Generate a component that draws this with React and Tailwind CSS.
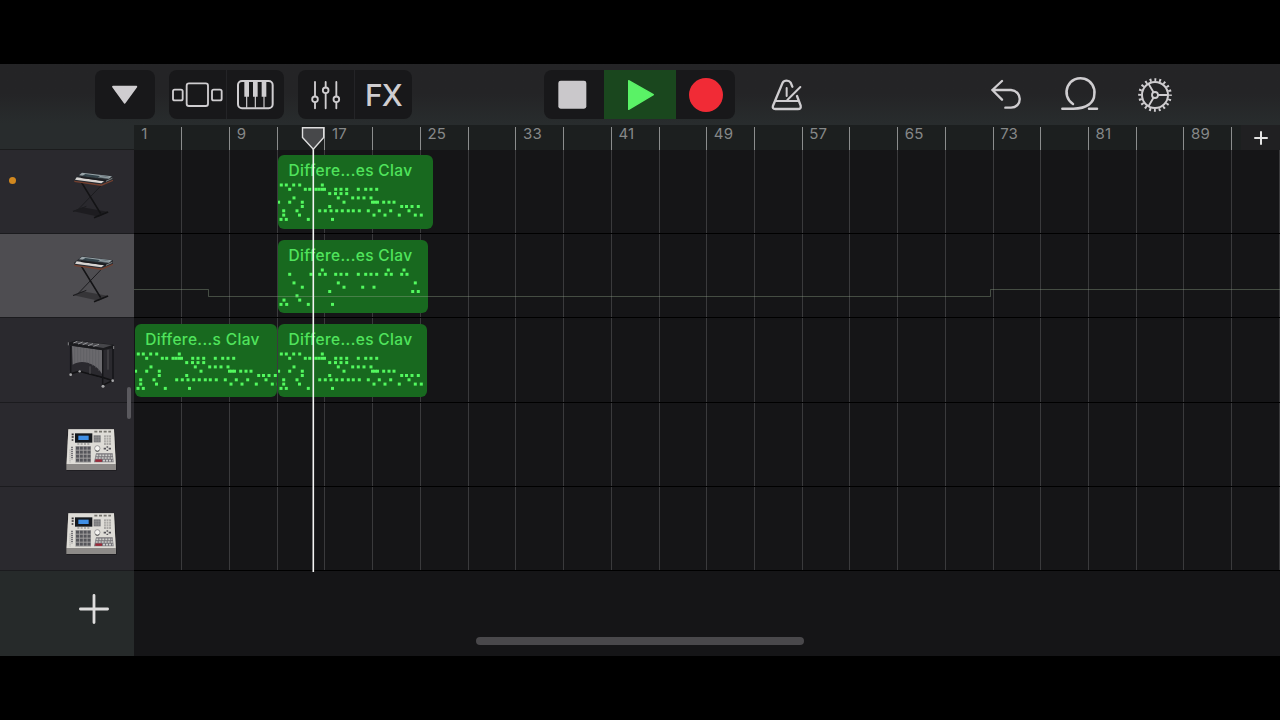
import React from "react";

const BAR_LABELS = Array.from({ length: 24 }, (_, i) =>
  i % 2 === 0 && i < 23 ? 1 + i * 4 : null,
);

// each entry is a pitch row, values are note positions inside the clip
const MELODY = [
  [3.3, 8.3, 15.7, 21.7, 44.3],
  [11.7, 27.3, 31.7, 38, 41, 44, 46.5, 57.7, 63, 68.7, 80.3, 87.7, 93, 98.7],
  [51.7, 57.5, 63, 68.7],
  [16, 60.3, 74.7, 80.3, 86, 93],
  [0.6, 11.7, 24.3, 66, 94.5, 97, 99.5, 105.7, 111, 116],
  [24.3, 51.7, 123.7, 128.5, 134, 140.3],
  [5.7, 19, 41.7, 47.3, 53, 58.7, 64.3, 70.3, 75.3, 81.3, 90.3, 101.3, 112.7, 131],
  [5.7, 21.5, 96, 107, 121.3, 137.3, 143.3],
  [3, 8.3, 30.3, 54.5],
];

const CHORDS = [
  [44.3, 110.3, 126],
  [11.7, 33, 41.7, 47.3, 57.7, 63, 68.7, 80.3, 87.7, 93, 98.7, 108, 113.3, 123.7, 129],
  [],
  [16, 60.3, 137.3],
  [24.3, 66, 84.7, 96],
  [51.7, 134.7, 140.3],
  [19],
  [6, 21.7],
  [3, 8.7, 30.3, 54.5],
];

const TRACKS = [
  {
    id: 1,
    instrument: "keyboard",
    armed: true,
    clips: [{ name: "Differe...es Clav", offset: 144.4, width: 154.4, notes: MELODY }],
  },
  {
    id: 2,
    instrument: "keyboard",
    selected: true,
    clips: [{ name: "Differe...es Clav", offset: 144.4, width: 150, notes: CHORDS }],
  },
  {
    id: 3,
    instrument: "vibraphone",
    clips: [
      { name: "Differe...s Clav", offset: 1.2, width: 141.8, notes: MELODY },
      { name: "Differe...es Clav", offset: 1.4, width: 148.6, notes: MELODY },
    ],
  },
  { id: 4, instrument: "sampler", clips: [] },
  { id: 5, instrument: "sampler", clips: [] },
];

function Icon({ box, className, children }) {
  return (
    <svg
      viewBox={box}
      className={`h-[49px] shrink-0 ${className}`}
      fill="none"
      stroke="#cfcdd0"
      strokeWidth="5.5"
      strokeLinecap="round"
      strokeLinejoin="round"
    >
      {children}
    </svg>
  );
}

function Keyboard() {
  return (
    <svg viewBox="198 0 156 252" className="h-[84px] w-[52px]">
      <path d="M217 183 248 172 327 186 296 200Z" fill="#000" opacity=".3" />
      <path d="M304 106 234 179M219 185l40-16" stroke="#1c1c1f" strokeWidth="3" />
      <path d="M245 98 302 191M282 203l42-17" stroke="#131315" strokeWidth="5" />
      <path d="M223 91 303 103 339 88V93L304 108 223 96Z" fill="#74402f" />
      <path d="M222 86 246 67 339 79V89L304 103 224 92Z" fill="#282b30" />
      <path d="M246 68 336 79 327 86 237 76Z" fill="#98a3a8" />
      <path d="M256 72 300 78 293 84 247 78Z" fill="#34444b" />
      <path d="M301 77l25 4M297 82l23 3" stroke="#59666c" strokeWidth="2" />
      <path d="M230 82 312 94 304 100 225 89Z" fill="#d6d3d1" />
      <path d="M243 82 318 92" stroke="#1b1b1e" strokeWidth="4" />
      <path d="M318 94l19-9" stroke="#7f8384" strokeWidth="3" />
    </svg>
  );
}

function Vibraphone() {
  return (
    <svg viewBox="198 0 156 252" className="h-[84px] w-[52px]">
      <path d="M237 160 307 178 339 188M210 168l28-8M307 202l32-15" stroke="#121214" strokeWidth="4.5" />
      <path d="M212 84v82M308 94v108M339 90v96" stroke="#151518" strokeWidth="4.5" />
      <path d="M324 95v60M270 145v23" stroke="#68686b" strokeWidth="2" />
      <path d="M216 84 306 96V168C290 137 246 121 218 140Z" fill="#6a696d" />
      <path
        d="M224 86v49M233 87v44M242 88v43M251 89v43M260 90v44M269 91v47M278 92v52M287 93v57M296 94v65"
        stroke="#5b5a5f"
        strokeWidth="1.5"
      />
      <path d="M206 74 228 67 341 80V90L307 97 206 82Z" fill="#1a1a1d" />
      <path d="M218 75 234 69 337 81 310 90Z" fill="#46464a" />
      <path
        d="M220 75l12-5M234 78l14-6M248 80l15-6M264 83l15-6M280 85l17-6"
        stroke="#a4a4a7"
        strokeWidth="2.5"
      />
      <path d="M205 73v9M341 84v9" stroke="#858588" strokeWidth="3" />
      <g fill="#a8a8aa">
        <circle cx="212" cy="170" r="4" />
        <circle cx="239" cy="160" r="3.5" />
        <circle cx="309" cy="205" r="4.5" />
        <circle cx="338" cy="188" r="4" />
      </g>
    </svg>
  );
}

function Sampler() {
  const pads = [0, 1, 2, 3];
  return (
    <svg viewBox="198 2 156 252" className="h-[84px] w-[52px]">
      <path d="M203 84 345 84 350 205 200 205Z" fill="#111113" opacity=".6" />
      <path d="M205 81H342L348 185V203H199V185Z" fill="#8d8a88" />
      <path d="M205 81H342L347 185H200Z" fill="#dedcd7" />
      <rect x="225" y="93" width="52" height="28" fill="#15181d" />
      <rect x="235" y="100" width="31" height="13" fill="#3f8fe6" />
      <path d="M215 96h6M215 104h6M215 113h5" stroke="#322e30" strokeWidth="5" />
      <path d="M232 125h40" stroke="#777" strokeWidth="3" strokeDasharray="6 4" />
      <path d="M283 88h50" stroke="#77756f" strokeWidth="5" strokeDasharray="9 5" />
      <path d="M216 133v38" stroke="#77757a" strokeWidth="6" strokeDasharray="4 2" />
      <path d="M210 142v38" stroke="#999" strokeWidth="3" strokeDasharray="3 3" />
      <rect x="226" y="131" width="47" height="50" fill="#a3a1a1" />
      {pads.map((r) =>
        pads.map((c) => (
          <rect key={`${r}-${c}`} x={228 + c * 11.5} y={133 + r * 12} width="9" height="9" fill="#55555a" />
        )),
      )}
      <rect x="281" y="99" width="21" height="21" fill="#77777a" />
      <path d="M281 106h21M281 113h21M288 99v21M295 99v21" stroke="#aaa" />
      <rect x="312" y="99" width="21" height="29" fill="#a8a6a4" />
      <path d="M312 106h21M312 113h21M312 120h21M319 99v29M326 99v29" stroke="#dedcd7" strokeWidth="2" />
      <circle cx="292" cy="138" r="8" fill="#f4f3f0" stroke="#77757a" strokeWidth="2" />
      <path d="M286 145q6 5 12 0" stroke="#555" strokeWidth="3" fill="none" />
      <path d="M311 139h7M326 139h7M322 132v4M322 142v4" stroke="#55535a" strokeWidth="5" />
      <path d="M288 153H338L341 180H282Z" fill="#77757a" />
      <path d="M289 159h48M287 167h51" stroke="#d0cfcc" strokeWidth="5" strokeDasharray="6 3" />
      <path d="M286 175h20" stroke="#9c2939" strokeWidth="7" />
      <path d="M309 175h29" stroke="#ccc" strokeWidth="5" strokeDasharray="6 3" />
    </svg>
  );
}

const INSTRUMENTS = {
  keyboard: Keyboard,
  vibraphone: Vibraphone,
  sampler: Sampler,
};

function Toolbar() {
  return (
    <header className="flex h-[61px] shrink-0 items-start pt-[6px] pl-[95px]">
      <button className="rounded-lg bg-[#18181a]">
        <Icon box="45 30 180 147" className="w-[60px]">
          <path d="M99 80H169L134 128Z" fill="#cfcdd0" />
        </Icon>
      </button>

      <div className="ml-[14px] flex rounded-lg bg-[#18181a]">
        <button className="w-[58px] border-r border-[#242427]">
          <Icon box="267 30 174 147" className="w-[58px]">
            <rect x="279" y="89" width="29" height="32" rx="5" />
            <rect x="320" y="70" width="64" height="68" rx="7" />
            <rect x="396" y="89" width="29" height="32" rx="5" />
          </Icon>
        </button>
        <button>
          <Icon box="441 30 171 147" className="w-[57px]">
            <rect x="474" y="63" width="104" height="82" rx="12" strokeWidth="6" />
            <path d="M500 108v34M526 108v34M552 108v34" strokeWidth="3.5" />
            <path
              d="M493 64h14v46h-14zM519 64h14v46h-14zM545 64h14v46h-14z"
              fill="#cfcdd0"
              stroke="none"
            />
          </Icon>
        </button>
      </div>

      <div className="ml-[14px] flex rounded-lg bg-[#18181a]">
        <button className="w-[57px] border-r border-[#242427]">
          <Icon box="654 30 171 147" className="w-[57px]">
            <path d="M705 66v43M705 127v18M737 66v16M737 100v45M769 66v43M769 127v18" />
            <circle cx="705" cy="118" r="8.5" />
            <circle cx="737" cy="91" r="8.5" />
            <circle cx="769" cy="118" r="8.5" />
          </Icon>
        </button>
        <button className="flex h-[49px] w-[57px] items-center justify-center pt-[2px] text-[30px] font-medium tracking-[-0.8px] text-[#cfcdd0]">
          FX
        </button>
      </div>

      <div className="ml-[132px] flex rounded-lg bg-[#18181a]">
        <button>
          <Icon box="42 30 180 147" className="w-[60px]">
            <rect x="85" y="62" width="84" height="84" rx="7" fill="#cac8cb" stroke="none" />
          </Icon>
        </button>
        <button className="bg-[#1a471e]">
          <Icon box="222 30 216 147" className="w-[72px]">
            <path d="M296 62 370 104 296 148Z" fill="#5af266" stroke="#5af266" strokeWidth="4" />
          </Icon>
        </button>
        <button>
          <Icon box="438 30 177 147" className="w-[59px]">
            <circle cx="528" cy="105" r="51" fill="#f12b36" stroke="none" />
          </Icon>
        </button>
      </div>

      <button className="ml-[35px]">
        <Icon box="720 30 102 147" className="w-[34px]">
          <path d="M787 80 782 68Q778 62 770 62Q761 62 758 68L735 123L729 137Q726 147 736 147H804Q814 147 812 137L801 108" strokeWidth="7" />
          <path d="M737 123H804M770 84v24M772 120 811 81" strokeWidth="6" />
        </Icon>
      </button>

      <button className="ml-[185px]">
        <Icon box="57 30 102 147" className="w-[34px]">
          <path d="M96 63 67 90 96 119M67 90H123C158 93 158 142 123 143H106" strokeWidth="7" />
        </Icon>
      </button>
      <button className="ml-[37px]">
        <Icon box="270 30 120 147" className="w-[40px]">
          <path d="M277 146H310C350 146 373 128 373 103A42 42 0 1 0 309 132M357 146H381" strokeWidth="7.5" />
        </Icon>
      </button>
      <button className="ml-[37px]">
        <Icon box="501 30 108 147" className="w-[36px]">
          <circle cx="555" cy="105" r="39" strokeWidth="6" />
          <circle
            cx="555"
            cy="105"
            r="46"
            strokeWidth="9"
            strokeLinecap="butt"
            pathLength="200"
            strokeDasharray="4 6"
            strokeDashoffset="2"
          />
          <circle cx="555" cy="105" r="9" />
          <path d="M565 105h27M550 96 536 72M550 114 536 138" />
        </Icon>
      </button>
    </header>
  );
}

function Ruler() {
  return (
    <div className="flex h-[25px] w-[1146px] overflow-hidden bg-[#1c1f1f] pt-[2px] pl-[0.6px]">
      {BAR_LABELS.map((label, i) => (
        <div
          key={i}
          className="w-[47.72px] shrink-0 border-r border-[#8b8d8d] pl-[6.6px] text-[15px] leading-[14px] tracking-[0.2px] text-[#868888]"
        >
          {label}
        </div>
      ))}
    </div>
  );
}

function Clip({ clip }) {
  return (
    <div
      className="mt-[5.4px] h-[73.4px] shrink-0 overflow-hidden rounded-[6px] bg-[#18691f]"
      style={{ marginLeft: clip.offset, width: clip.width }}
    >
      <div className="h-[24px] pt-[5px] pl-[10px] text-[15.5px] leading-[22px] font-medium tracking-[0.35px] whitespace-nowrap text-[#50e45c]">
        {clip.name}
      </div>
      <svg width={clip.width} height="50" className="block" fill="#53f95f">
        {clip.notes.map((row, r) =>
          row.map((x) => (
            <rect key={`${r}-${x}`} x={x - 1.5} y={4.5 + r * 4.3} width="3" height="3" />
          )),
        )}
      </svg>
    </div>
  );
}

function TrackHeader({ track }) {
  const Instrument = INSTRUMENTS[track.instrument];
  return (
    <div
      className={`flex h-[84.2px] shrink-0 items-start justify-between border-b border-[#1b1b1e] pr-4 pl-[8.5px] ${
        track.selected ? "bg-[#4e4d51]" : "bg-[#2a292e]"
      }`}
    >
      <span
        className={`mt-[27px] size-[7px] rounded-full ${track.armed ? "bg-[#d2881f]" : "bg-transparent"}`}
      />
      <Instrument />
    </div>
  );
}

function Sidebar() {
  return (
    <aside className="relative w-[134px] shrink-0">
      <div className="h-[25px] border-b border-[#1b1c1d]" />
      {TRACKS.map((track) => (
        <TrackHeader key={track.id} track={track} />
      ))}
      <button className="flex h-[85px] w-full justify-end bg-[#262a2a] pt-[23px] pr-[25px]">
        <svg viewBox="0 0 30 30" className="size-[30px]" stroke="#dedddd" strokeWidth="2.8" strokeLinecap="round">
          <path d="M15 1.4v27.2M1.4 15h27.2" />
        </svg>
      </button>
      {/* vertical scroll thumb */}
      <div className="absolute top-[262px] right-[3px] h-[32px] w-[4px] rounded-full bg-[#5a595e]" />
    </aside>
  );
}

function Arrangement() {
  return (
    <main className="relative flex w-[1146px] flex-col bg-[#151517]">
      <Ruler />
      <div className="grid h-[421px] overflow-hidden">
        <div className="flex pl-[0.6px] [grid-area:1/1]">
          {BAR_LABELS.map((_, i) => (
            <div key={i} className="w-[47.72px] shrink-0 border-r border-[#3a3a3c]" />
          ))}
        </div>
        <div className="[grid-area:1/1]">
          {TRACKS.map((track) => (
            <div key={track.id} className="flex h-[84.2px] items-start border-b border-black">
              {track.clips.map((clip, i) => (
                <Clip key={i} clip={clip} />
              ))}
            </div>
          ))}
        </div>
      </div>
      <div className="flex flex-1 items-end pb-[11px] pl-[342px]">
        <div className="h-[8px] w-[328px] rounded-full bg-[#49484b]" />
      </div>

      {/* automation curve of the selected track */}
      <svg className="absolute top-[155px] left-0 h-[20px] w-[1146px]" fill="none" stroke="#8ea286" strokeOpacity=".4">
        <path d="M0 9.5H74.5V16.5H856.5V9.5H1146" />
      </svg>

      {/* playhead */}
      <svg className="absolute top-0 left-[167px] h-[447px] w-[24px]">
        <path d="M12.3 24V447" stroke="#f4f4f4" strokeWidth="1.6" />
        <path d="M1.5 2.7H22.7V12.5L12.3 24.3 1.5 12.5Z" fill="#47484a" stroke="#dedede" strokeWidth="1.4" />
      </svg>

      <button className="absolute top-0 right-0 flex h-[25px] w-[39px] items-center justify-center bg-[#202022]">
        <svg viewBox="0 0 14 14" className="size-[14px]" stroke="#e4e4e4" strokeWidth="2" strokeLinecap="round">
          <path d="M7 1v12M1 7h12" />
        </svg>
      </button>
    </main>
  );
}

function App() {
  return (
    <div className="h-[720px] w-[1280px] overflow-hidden bg-black py-16 font-['Inter','Liberation_Sans',sans-serif]">
      <div className="flex h-[592px] flex-col bg-linear-to-b from-[#242426] from-[5%] to-[#282c2d] to-[10%]">
        <Toolbar />
        <div className="flex flex-1">
          <Sidebar />
          <Arrangement />
        </div>
      </div>
    </div>
  );
}

export default App;
